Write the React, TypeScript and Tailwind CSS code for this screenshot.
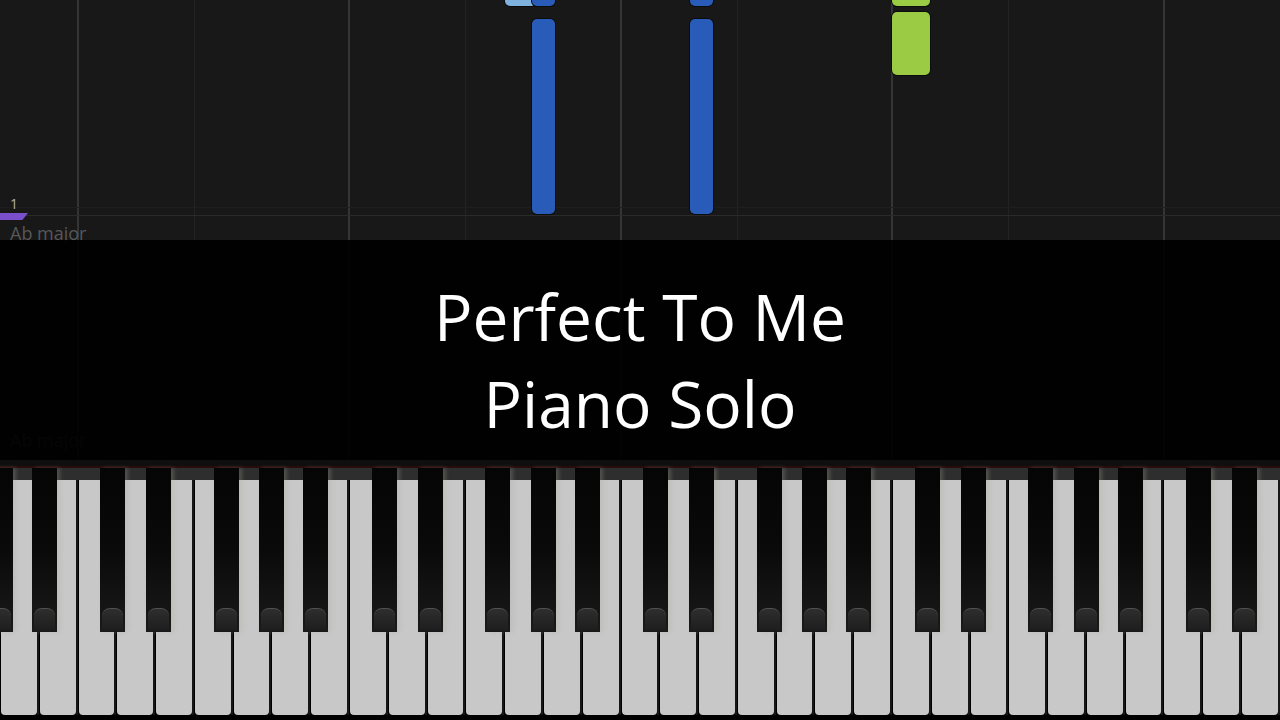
import React from "react";

const KEY_W = 1280 / 33;
const NAMES = ["A", "B", "C", "D", "E", "F", "G"];
// black key left edge, relative to the divider it sits on
const BLACK_OFFSET: Record<string, number> = { C: -16, D: -9, F: -19, G: -12.5, A: -7 };

const whiteKeys = Array.from({ length: 33 }, (_, i) => NAMES[i % 7]);

const blackKeys: number[] = [];
for (let i = -1; i < 33; i++) {
  const name = NAMES[((i % 7) + 7) % 7];
  if (name in BLACK_OFFSET && i < 32) blackKeys.push((i + 1) * KEY_W + BLACK_OFFSET[name]);
}

const cLines = [2, 9, 16, 23, 30].map((k) => k * KEY_W);
const fLines = [5, 12, 19, 26].map((k) => k * KEY_W);

const notes = [
  { left: 505, top: -6, w: 32, h: 12, color: "bg-[#7fb1de]" },
  { left: 532, top: -6, w: 23, h: 12, color: "bg-[#285cb8]" },
  { left: 690, top: -6, w: 23, h: 12, color: "bg-[#285cb8]" },
  { left: 892, top: -6, w: 38, h: 12, color: "bg-[#9bcb45]" },
  { left: 532, top: 19, w: 23, h: 195, color: "bg-[#285cb8]" },
  { left: 690, top: 19, w: 23, h: 195, color: "bg-[#285cb8]" },
  { left: 892, top: 12, w: 38, h: 63, color: "bg-[#9bcb45]" },
];

const PianoRoll = () => (
  <div className="relative h-[460px] overflow-hidden bg-[#181818]">
    {/* grid */}
    {fLines.map((x) => (
      <div key={x} className="absolute top-0 h-full w-px bg-[#232323]" style={{ left: x }} />
    ))}
    {cLines.map((x) => (
      <div key={x} className="absolute top-0 h-full w-[2px] bg-[#353535]" style={{ left: x - 1 }} />
    ))}
    <div className="absolute left-0 top-[207px] h-px w-full bg-[#1e1e1e]" />
    <div className="absolute left-0 top-[215px] h-px w-full bg-[#2a2a2a]" />

    {/* measure marker */}
    <div className="absolute left-0 top-[213px] h-[7px] w-[28px] bg-[#7a4fcc] [clip-path:polygon(0_0,100%_0,80%_100%,0_100%)]" />
    <span className="absolute left-[10px] top-[197px] font-['Open_Sans',sans-serif] text-[14px] leading-none text-[#b0b0b0]">
      1
    </span>
    <span className="absolute left-[10px] top-[224px] font-['Open_Sans',sans-serif] text-[18px] leading-none text-[#575757]">
      Ab major
    </span>
    <span className="absolute left-[10px] top-[431px] font-['Open_Sans',sans-serif] text-[18px] leading-none text-[#575757]">
      Ab major
    </span>

    {/* falling notes */}
    {notes.map((n, i) => (
      <div
        key={i}
        className={`absolute rounded-[5px] shadow-[0_0_0_1px_#0c0c0c] ${n.color}`}
        style={{ left: n.left, top: n.top, width: n.w, height: n.h }}
      />
    ))}

    {/* title banner */}
    <div className="absolute left-0 top-[240px] flex h-[220px] w-full flex-col items-center bg-black/[0.94] pt-[33px] font-['Open_Sans',sans-serif] text-[64px] leading-[87px] text-white">
      <span>Perfect To Me</span>
      <span>Piano Solo</span>
    </div>
  </div>
);

const Keyboard = () => (
  <div className="relative h-[260px] bg-black">
    <div className="h-[6px] bg-[#0f0f0f]" />
    <div className="h-[2px] bg-[#2a0c0c]" />
    <div className="relative flex h-[247px]">
      {whiteKeys.map((name, i) => (
        <div key={i} className="flex-1 border-r-2 border-[#161616] pl-[1px]">
          <div className="h-full rounded-b-[4px] bg-[#c8c8c8]" />
        </div>
      ))}
      {/* felt strip */}
      <div className="absolute left-0 top-0 h-[12px] w-full bg-[#2e2e2e]" />
      {blackKeys.map((x) => (
        <div
          key={x}
          className="absolute top-0 flex h-[164px] w-[25px] flex-col justify-end bg-gradient-to-b from-[#050505] via-[#0a0a0a] to-[#1a1a1a] px-[2px] pb-[2px] shadow-[3px_0_4px_rgba(170,170,160,0.3)]"
          style={{ left: x }}
        >
          <div className="h-[22px] rounded-t-[8px] border-t border-[#505050] bg-gradient-to-b from-[#2e2e2e] to-[#1e1e1e]" />
        </div>
      ))}
    </div>
  </div>
);

export default function App() {
  return (
    <div className="h-[720px] w-[1280px] overflow-hidden bg-black">
      <PianoRoll />
      <Keyboard />
    </div>
  );
}
